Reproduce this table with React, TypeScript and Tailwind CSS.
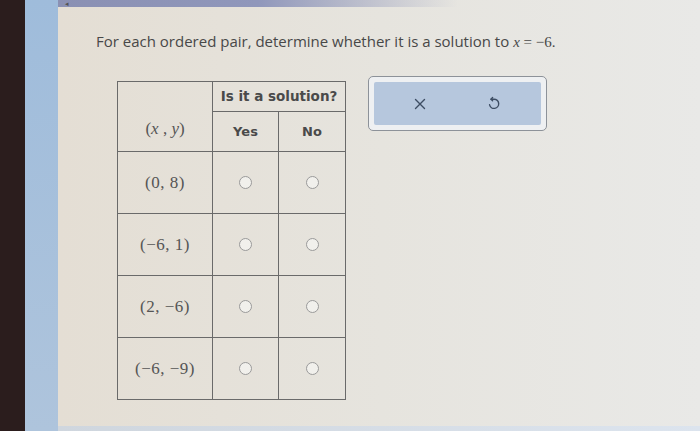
import React from 'react'

const rows = ['(0, 8)', '(−6, 1)', '(2, −6)', '(−6, −9)']

function Radio() {
  return <span className="inline-block w-[13px] h-[13px] rounded-full border border-[#9a9a9a] bg-[#f1f0ec]" />
}

function UndoIcon() {
  return (
    <svg width="16" height="16" viewBox="0 0 16 16" fill="none" stroke="#3d4d63" strokeWidth="1.4" strokeLinecap="round" strokeLinejoin="round">
      <path d="M5 3.2 H8 A4.6 4.6 0 1 1 3.6 8.8" />
      <path d="M6.6 1.6 L5 3.2 L6.6 4.8" />
    </svg>
  )
}

export default function App() {
  return (
    <div className="w-[700px] h-[431px] overflow-hidden flex bg-[#e6e3dd]" style={{ fontFamily: '"Open Sans", "DejaVu Sans", sans-serif' }}>
      {/* screen bezel */}
      <div className="w-[25px] h-full bg-[#2b1d1d]" />
      <div className="w-[33px] h-full bg-gradient-to-b from-[#9fbcdb] to-[#aec4dc]" />

      <div className="flex-1 flex flex-col bg-gradient-to-r from-[#e4ded4] via-[#e6e4de] to-[#e9e9e7]">
        {/* top bar */}
        <div className="flex items-center h-[7px] w-[400px] pl-[7px] bg-gradient-to-r from-[#8a90b3] via-[#9097bb] to-transparent">
          <span className="text-[7px] leading-none text-[#555]">◂</span>
        </div>

        <p className="mt-[24px] pl-[38px] text-[15px] text-[#484848] leading-[20px]">
          For each ordered pair, determine whether it is a solution to{' '}
          <span className="italic" style={{ fontFamily: '"Liberation Serif", serif' }}>x</span>
          <span style={{ fontFamily: '"Liberation Serif", serif' }}> = −6.</span>
        </p>

        <div className="flex items-start mt-[29px] pl-[59px]">
          <table className="border-collapse border border-[#6a6a6a] text-[#555]">
            <tbody>
              <tr className="h-[30px]">
                <td rowSpan={2} className="w-[95px] pt-[24px] border border-[#6a6a6a] text-center text-[17px]" style={{ fontFamily: '"Liberation Serif", serif' }}>
                  (<i>x</i> , <i>y</i>)
                </td>
                <td colSpan={2} className="border border-[#6a6a6a] text-center text-[13.5px] font-bold text-[#4a4a4a]" style={{ fontFamily: '"DejaVu Sans", sans-serif' }}>
                  Is it a solution?
                </td>
              </tr>
              <tr className="h-[40px]">
                <td className="w-[66px] border border-[#6a6a6a] text-center text-[13px] font-bold text-[#4a4a4a]" style={{ fontFamily: '"DejaVu Sans", sans-serif' }}>Yes</td>
                <td className="w-[67px] border border-[#6a6a6a] text-center text-[13px] font-bold text-[#4a4a4a]" style={{ fontFamily: '"DejaVu Sans", sans-serif' }}>No</td>
              </tr>
              {rows.map((r) => (
                <tr key={r} className="h-[62px]">
                  <td className="border border-[#6a6a6a] text-center text-[17px] tracking-[0.5px]" style={{ fontFamily: '"Liberation Serif", serif' }}>{r}</td>
                  <td className="border border-[#6a6a6a] text-center"><Radio /></td>
                  <td className="border border-[#6a6a6a] text-center"><Radio /></td>
                </tr>
              ))}
            </tbody>
          </table>

          <div className="ml-[22px] mt-[-5px] w-[179px] h-[55px] rounded-[5px] border border-[#8d9299] bg-[#eef0f2] p-[5px]">
            <div className="h-full flex items-center justify-around bg-[#b6c7dd] rounded-[2px] px-[10px]">
              <svg width="14" height="14" viewBox="0 0 14 14" stroke="#3d4d63" strokeWidth="1.4" strokeLinecap="round">
                <path d="M2.5 2.5 L11.5 11.5 M11.5 2.5 L2.5 11.5" />
              </svg>
              <UndoIcon />
            </div>
          </div>
        </div>

        <div className="mt-auto h-[5px] bg-gradient-to-r from-[#cfd6de] to-[#dce4ee]" />
      </div>
    </div>
  )
}
